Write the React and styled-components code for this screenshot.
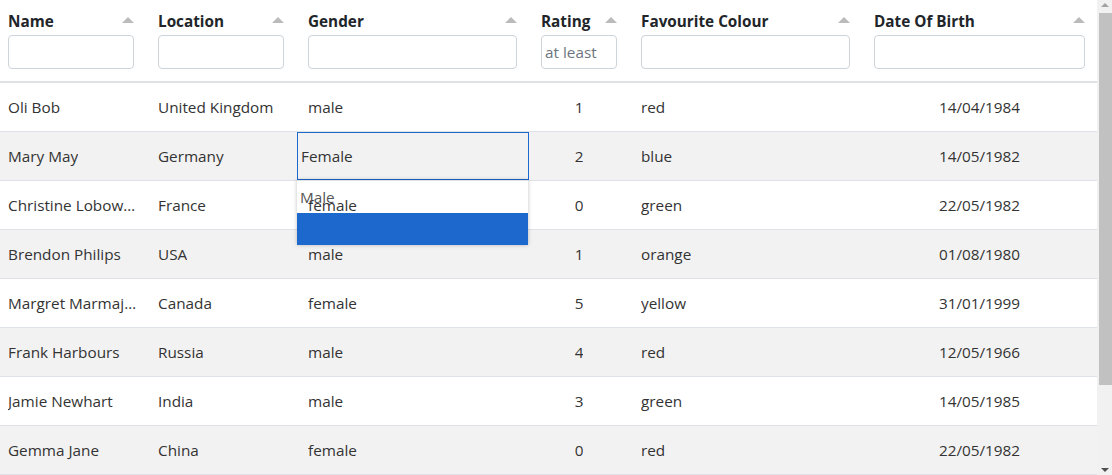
import React from "react";
import styled, { createGlobalStyle } from "styled-components";

const Global = createGlobalStyle`
  html, body { margin: 0; padding: 0; overflow: hidden; }
  body { font-family: "Open Sans", "Noto Sans", sans-serif; color: #212529; background: #fff; }
  * { box-sizing: border-box; }
`;

const columns = [
  { key: "name", title: "Name", width: 150 },
  { key: "location", title: "Location", width: 150 },
  { key: "gender", title: "Gender", width: 233 },
  { key: "rating", title: "Rating", width: 100, align: "center", placeholder: "at least" },
  { key: "col", title: "Favourite Colour", width: 233 },
  { key: "dob", title: "Date Of Birth", width: 231, align: "center", rightPad: 12 },
];

const rows = [
  ["Oli Bob", "United Kingdom", "male", 1, "red", "14/04/1984"],
  ["Mary May", "Germany", "female", 2, "blue", "14/05/1982"],
  ["Christine Lobowski", "France", "female", 0, "green", "22/05/1982"],
  ["Brendon Philips", "USA", "male", 1, "orange", "01/08/1980"],
  ["Margret Marmajuke", "Canada", "female", 5, "yellow", "31/01/1999"],
  ["Frank Harbours", "Russia", "male", 4, "red", "12/05/1966"],
  ["Jamie Newhart", "India", "male", 3, "green", "14/05/1985"],
  ["Gemma Jane", "China", "female", 0, "red", "22/05/1982"],
  ["Emily Sykes", "South Korea", "female", 1, "maroon", "11/11/1970"],
  ["James Newman", "Japan", "male", 5, "red", "22/03/1998"],
];

const Page = styled.div`
  height: 100vh;
  display: flex;
  overflow: hidden;
`;

const Viewport = styled.div`
  flex: 1;
  overflow: hidden;
`;

const ScrollBar = styled.div`
  width: 15px;
  flex: none;
  background: #f1f1f1;
  display: flex;
  flex-direction: column;
`;

const ScrollButton = styled.div`
  height: 13px;
  flex: none;
  display: flex;
  align-items: center;
  justify-content: center;
  &::after {
    content: "";
    width: 0;
    height: 0;
    border-left: 4px solid transparent;
    border-right: 4px solid transparent;
    ${(p) =>
      p.$down
        ? "border-top: 4px solid #505050; margin-top: 2px;"
        : "border-bottom: 4px solid #a3a3a3; margin-top: -3px;"}
  }
`;

const ScrollTrack = styled.div`
  flex: 1;
  padding-left: 2px;
`;

const ScrollThumb = styled.div`
  height: 372px;
  background: #c1c1c1;
`;

const Table = styled.div`
  position: relative;
  width: 1097px;
  font-size: 15.3px;
`;

const HeaderRow = styled.div`
  display: flex;
  border-bottom: 2px solid #dee2e6;
`;

const HeaderCell = styled.div`
  width: ${(p) => p.$w}px;
  flex: none;
  padding: 10px ${(p) => p.$rp || 16}px 12px 8px;
  display: flex;
  flex-direction: column;
`;

const TitleRow = styled.div`
  height: 25px;
  display: flex;
  align-items: center;
  justify-content: space-between;
  font-weight: 700;
  padding-bottom: 3px;
`;

const SortArrow = styled.span`
  width: 0;
  height: 0;
  border-left: 6px solid transparent;
  border-right: 6px solid transparent;
  border-bottom: 6px solid #bbb;
  margin-top: -2px;
`;

const FilterInput = styled.input`
  height: 34px;
  width: 100%;
  border: 1px solid #ced4da;
  border-radius: 4px;
  font-family: inherit;
  font-size: 15.3px;
  padding: 0 3px;
  color: #495057;
  background: #fff;
  &::placeholder { color: #6c757d; }
`;

const Row = styled.div`
  display: flex;
  height: 49px;
  border-bottom: 1px solid #dee2e6;
  color: #333;
  background: ${(p) => (p.$odd ? "#f2f2f2" : "#fff")};
`;

const Cell = styled.div`
  position: relative;
  width: ${(p) => p.$w}px;
  flex: none;
  padding: 0 8px;
  display: flex;
  align-items: center;
  justify-content: ${(p) => (p.$align === "center" ? "center" : "flex-start")};
  padding-right: ${(p) => (p.$align === "center" ? 8 + (p.$shift || 0) : 8)}px;
  white-space: nowrap;
  overflow: ${(p) => (p.$editing ? "visible" : "hidden")};
`;

const CellText = styled.span`
  overflow: hidden;
  text-overflow: ellipsis;
  white-space: nowrap;
`;

const Editor = styled.div`
  position: absolute;
  left: -3px;
  top: 0;
  width: 232px;
  height: 48px;
  border: 1px solid #1d68cd;
  background: #f2f2f2;
  display: flex;
  align-items: center;
  padding-left: 3px;
  z-index: 2;
`;

const List = styled.div`
  position: absolute;
  left: -3px;
  top: 48px;
  width: 231px;
  z-index: 3;
  box-shadow: 0 0 4px rgba(0, 0, 0, 0.25);
  display: flex;
  flex-direction: column;
`;

const ListItem = styled.div`
  height: ${(p) => (p.$active ? 32 : 33)}px;
  padding: 7px 3px 0;
  color: #555;
  background: ${(p) => (p.$active ? "#1d68cd" : "transparent")};
`;

export default function App() {
  return (
    <Page>
      <Global />
      <Viewport>
        <Table>
          <HeaderRow>
            {columns.map((c) => (
              <HeaderCell key={c.key} $w={c.width} $rp={c.rightPad}>
                <TitleRow>
                  <span>{c.title}</span>
                  <SortArrow />
                </TitleRow>
                <FilterInput placeholder={c.placeholder || ""} />
              </HeaderCell>
            ))}
          </HeaderRow>
          {rows.map((r, i) => (
            <Row key={i} $odd={i % 2 === 1}>
              {columns.map((c, j) => {
                const editing = i === 1 && j === 2;
                return (
                  <Cell
                    key={c.key}
                    $w={c.width}
                    $align={c.align}
                    $shift={j === 3 ? 8 : j === 5 ? 4 : 0}
                    $editing={editing}
                  >
                    <CellText>{String(r[j])}</CellText>
                    {editing && (
                      <>
                        <Editor>Female</Editor>
                        <List>
                          <ListItem>Male</ListItem>
                          <ListItem $active />
                        </List>
                      </>
                    )}
                  </Cell>
                );
              })}
            </Row>
          ))}
        </Table>
      </Viewport>
      <ScrollBar>
        <ScrollButton />
        <ScrollTrack>
          <ScrollThumb />
        </ScrollTrack>
        <ScrollButton $down />
      </ScrollBar>
    </Page>
  );
}
